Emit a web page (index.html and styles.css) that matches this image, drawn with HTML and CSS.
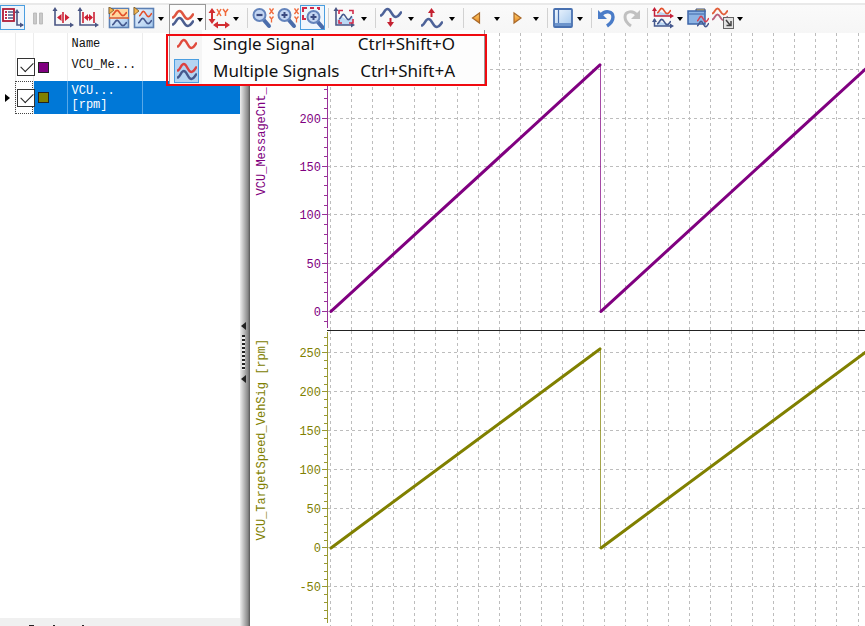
FILE: index.html
```html
<!DOCTYPE html>
<html lang="en">
<head>
    <title>Graphics</title>
    <meta charset="utf-8">
    <link rel="stylesheet" href="styles.css">
</head>
<body>
    <!-- shared shapes and gradients -->
    <svg class="defs" width="0" height="0" aria-hidden="true">
        <defs>
            <linearGradient id="gSky" x2="1" y2="1"><stop offset="0" stop-color="#f2f8ff"/><stop offset="1" stop-color="#a4c8ee"/></linearGradient>
            <linearGradient id="gOrange" x2="0" y2="1"><stop offset="0" stop-color="#ffd070"/><stop offset="1" stop-color="#e8861c"/></linearGradient>
        </defs>
        <symbol id="wave" viewBox="0 0 22 12" preserveAspectRatio="none"><path d="M1 8.500C4 7 4.500 2 7.500 2C11 2 12 10 16 10C18.500 10 19 8 21 5.500" fill="none" stroke-width="2.600" stroke-linecap="round"/></symbol>
        <symbol id="axes" viewBox="0 0 22 22"><path d="M3 3V18H20" fill="none" stroke="#4a5684" stroke-width="1.600"/><path d="M3 0L0.500 4H5.500ZM22 18L18 15.500V20.500Z" fill="#4a5684"/></symbol>
        <symbol id="lens" viewBox="0 0 22 22"><path d="M11 12L17 19" stroke="#4a6cab" stroke-width="4" stroke-linecap="round"/><circle cx="7.500" cy="8" r="6" fill="#c4d6f2" stroke="#6484bc" stroke-width="2"/></symbol>
        <symbol id="xy" viewBox="0 0 5 15"><path d="M0.500 0.500L4.500 6M4.500 0.500L0.500 6M0.500 8.500L2.500 11L4.500 8.500M2.500 11V14.500" fill="none" stroke="#f06a3c" stroke-width="1.300"/></symbol>
    </svg>

    <div class="window">
        <div class="toolbar" role="toolbar">
            <button class="tool active" title="Legend"><svg viewBox="0 0 22 22"><path d="M15 5V18H21" fill="none" stroke="#4a5684" stroke-width="1.600"/><path d="M15 2L12.500 6H17.500ZM22 18L18 15.500V20.500Z" fill="#4a5684"/><rect x="1" y="2" width="11" height="12" fill="#fff" stroke="#b01c38" stroke-width="1.800"/><path d="M3 5H5M3 8H5M3 11H5" stroke="#c03050" stroke-width="1.800"/><path d="M6 5H11M6 8H11M6 11H11" stroke="#4a5684" stroke-width="1.500"/></svg></button>
            <button class="tool" title="Pause"><svg viewBox="0 0 22 22"><path d="M6.500 6H9.500V17H6.500ZM12.500 6H15.500V17H12.500Z" fill="#c9c9c9" stroke="#b4b4b4" stroke-width="0.800"/></svg></button>
            <button class="tool" title="Expand time axis"><svg viewBox="0 0 22 22"><use href="#axes"/><path d="M11 5V16" stroke="#cc2034" stroke-width="1.600"/><path d="M5 10.500L9.500 7V14ZM17.500 10.500L13 7V14Z" fill="#cc2034"/></svg></button>
            <button class="tool" title="Fit time axis"><svg viewBox="0 0 22 22"><use href="#axes"/><path d="M6 5V16M17 5V16M8 10.500H15" stroke="#cc2034" stroke-width="1.600"/><path d="M7 10.500L11 7V14ZM16 10.500L12 7V14Z" fill="#cc2034"/></svg></button>
            <span class="sep"></span>
            <button class="tool" title="Separate views"><svg viewBox="0 0 22 22"><rect x="1.500" y="1.500" width="19" height="19" fill="url(#gSky)" stroke="#5c80b4" stroke-width="1.600"/><rect x="2" y="2" width="18" height="8" fill="#ffd8a0"/><path d="M1 11H21" stroke="#e2602c" stroke-width="1.600"/><use href="#wave" x="4" y="2" width="15" height="8" stroke="#e2502c"/><use href="#wave" x="4" y="12" width="15" height="8" stroke="#46598e"/><path d="M1 0L6 3L1 7Z" fill="#f2b550" stroke="#7a5620" stroke-width="0.800"/></svg></button>
            <button class="tool" title="Common view"><svg viewBox="0 0 22 22"><rect x="1.500" y="1.500" width="19" height="19" fill="url(#gSky)" stroke="#5c80b4" stroke-width="1.600"/><use href="#wave" x="6" y="3" width="13" height="8" stroke="#e2502c"/><use href="#wave" x="5" y="10" width="14" height="8" stroke="#46598e"/><path d="M1 0L6 4L1 8Z" fill="#f2b550" stroke="#7a5620" stroke-width="0.800"/></svg></button>
            <button class="drop" title="View options"></button>
            <div class="split">
                <button class="tool" title="Signal selection"><svg viewBox="0 0 22 22"><use href="#wave" y="2" width="22" height="12" stroke="#df5540"/><use href="#wave" y="9" width="22" height="12" stroke="#4d5f90"/></svg></button>
                <button class="drop" title="Signal selection options"></button>
            </div>
            <button class="tool" title="Axis mode"><svg viewBox="0 0 22 22"><path d="M4 4V14M8 18H19" stroke="#d22c30" stroke-width="2"/><path d="M4 1L0.500 6H7.500ZM4 17L0.500 12H7.500ZM5 18L10 14.500V21.500ZM22 18L17 14.500V21.500Z" fill="#d22c30"/><path d="M9 2L13 9M13 2L9 9M15 2L17.500 5.500L20 2M17.500 5.500V9" fill="none" stroke="#f06a3c" stroke-width="1.500"/></svg></button>
            <button class="drop" title="Axis mode options"></button>
            <span class="sep"></span>
            <button class="tool" title="Zoom out"><svg viewBox="0 0 22 22"><use href="#lens"/><path d="M4.500 8H10.500" stroke="#3a4a80" stroke-width="2.200"/><use href="#xy" x="17" y="1" width="5" height="15"/></svg></button>
            <button class="tool" title="Zoom in"><svg viewBox="0 0 22 22"><use href="#lens"/><path d="M4.500 8H10.500M7.500 5V11" stroke="#3a4a80" stroke-width="2"/><use href="#xy" x="17" y="1" width="5" height="15"/></svg></button>
            <button class="tool active" title="Zoom rectangle"><svg viewBox="0 0 22 22"><path d="M1 5V1H5M8 1H12M1 8V12H4M15 1H17V3" fill="none" stroke="#d22c4a" stroke-width="2"/><use href="#lens" x="4" y="2" width="22" height="22"/><path d="M8.500 10H14.500M11.500 7V13" stroke="#3a4a80" stroke-width="2"/></svg></button>
            <span class="sep"></span>
            <button class="tool" title="Fit"><svg viewBox="0 0 22 22"><path d="M4 13L8 9L14 13L20 9V18H4Z" fill="#bcd8f4"/><use href="#axes"/><use href="#wave" x="6" y="6" width="13" height="8" stroke="#46598e"/><path d="M6 7V3.500H10M16 3.500H20V7M20 12V16H16M6 13V16H9" fill="none" stroke="#d22c4a" stroke-width="1.600"/></svg></button>
            <button class="drop wide" title="Fit options"></button>
            <span class="sep"></span>
            <button class="tool" title="Move down"><svg viewBox="0 0 22 22"><use href="#wave" width="22" height="12" stroke="#4d6298"/><path d="M10.500 11V16" stroke="#c42030" stroke-width="2"/><path d="M7 15H14L10.500 20Z" fill="#c42030"/></svg></button>
            <button class="drop wide" title="Move down options"></button>
            <button class="tool" title="Move up"><svg viewBox="0 0 22 22"><use href="#wave" y="10" width="22" height="12" stroke="#4d6298"/><path d="M10.500 5V10" stroke="#c42030" stroke-width="2"/><path d="M7 6H14L10.500 1Z" fill="#c42030"/></svg></button>
            <button class="drop wide" title="Move up options"></button>
            <span class="sep"></span>
            <button class="tool step" title="Previous"><svg viewBox="0 0 22 22"><path d="M5.500 11L12.500 6V16Z" fill="url(#gOrange)" stroke="#a8692a" stroke-width="1.200"/></svg></button>
            <button class="drop wide" title="Previous options"></button>
            <button class="tool step" title="Next"><svg viewBox="0 0 22 22"><path d="M15 11L8 6V16Z" fill="url(#gOrange)" stroke="#a8692a" stroke-width="1.200"/></svg></button>
            <button class="drop wide" title="Next options"></button>
            <span class="sep"></span>
            <button class="tool" title="Layout"><svg viewBox="0 0 22 22"><rect x="2" y="2" width="18" height="18" rx="1" fill="url(#gSky)" stroke="#4870b0" stroke-width="1.800"/><path d="M3 16H19V19H3Z" fill="#6c94cc"/><path d="M6.500 3V16" stroke="#4870b0" stroke-width="1.200"/></svg></button>
            <button class="drop" title="Layout options"></button>
            <span class="sep"></span>
            <button class="tool" title="Undo"><svg viewBox="0 0 22 22"><path d="M5 8C9 3 17 4 17 10C17 14 14 17 11 19" fill="none" stroke="#4a7cc8" stroke-width="3.400"/><path d="M2 3V12H11Z" fill="#4a7cc8"/></svg></button>
            <button class="tool" title="Redo"><svg viewBox="0 0 22 22"><path d="M16 8C12 3 4 4 4 10C4 14 7 17 10 19" fill="none" stroke="#c0c0c0" stroke-width="3"/><path d="M19 3V12H10Z" fill="#c0c0c0"/></svg></button>
            <span class="sep"></span>
            <button class="tool" title="Axis arrangement"><svg viewBox="0 0 22 22"><path d="M3 9L8 5L20 8V9ZM3 19L8 15L20 18V19Z" fill="#bcd8f4"/><path d="M2.500 2V9H20" fill="none" stroke="#c42038" stroke-width="1.500"/><path d="M2.500 0L0 4H5ZM22 9L18 6.500V11.500Z" fill="#c42038"/><path d="M2.500 12V19H20" fill="none" stroke="#46598e" stroke-width="1.500"/><path d="M2.500 11L0 15H5ZM22 19L18 16.500V21.500Z" fill="#46598e"/><use href="#wave" x="5" y="0" width="14" height="8" stroke="#e2502c"/><use href="#wave" x="5" y="11" width="14" height="8" stroke="#46598e"/></svg></button>
            <button class="drop" title="Axis arrangement options"></button>
            <button class="tool" title="Signal file"><svg viewBox="0 0 22 22"><path d="M9 2H18V5H9Z" fill="#f4cf60" stroke="#3c4f80"/><rect x="1" y="4" width="17" height="13" fill="#8db4e4" stroke="#3e66a8" stroke-width="1.500"/><path d="M2 7H17" stroke="#3e66a8"/><use href="#wave" x="10" y="8" width="12" height="8" stroke="#d84050"/><use href="#wave" x="10" y="13" width="12" height="8" stroke="#46598e"/></svg></button>
            <button class="tool" title="Export signals"><svg viewBox="0 0 22 22"><use href="#wave" width="16" height="9" stroke="#e2603c"/><use href="#wave" y="6" width="16" height="9" stroke="#b8607c"/><rect x="11.500" y="10.500" width="10" height="11" fill="#e4e4e4" stroke="#666"/><path d="M14 13L18 18M19 14V18.500H14.500" fill="none" stroke="#444" stroke-width="1.500"/></svg></button>
            <button class="drop" title="Export options"></button>
        </div>

        <div class="main">
            <div class="legend">
                <table class="signals">
                    <colgroup><col class="c-mark"><col class="c-check"><col class="c-color"><col class="c-name"><col></colgroup>
                    <thead>
                        <tr><th></th><th></th><th></th><th>Name</th><th></th></tr>
                    </thead>
                    <tbody>
                        <tr class="row1">
                            <td></td>
                            <td><input type="checkbox" checked aria-label="VCU_MessageCnt"></td>
                            <td><span class="swatch purple"></span></td>
                            <td>VCU_Me...</td>
                            <td></td>
                        </tr>
                        <tr class="row2 selected">
                            <td><span class="marker"></span></td>
                            <td><input type="checkbox" checked aria-label="VCU_TargetSpeed"></td>
                            <td><span class="swatch olive"></span></td>
                            <td>VCU...<br>[rpm]</td>
                            <td></td>
                        </tr>
                    </tbody>
                </table>
                <div class="footer"><svg width="90" height="8"><path d="M29 7.500H34M53 7.500H55M82 7.500H84" stroke="#222"/></svg></div>
            </div>
            <div class="splitter">
                <span class="grip-arrow"></span>
                <span class="grip-dots"></span>
                <span class="grip-arrow"></span>
            </div>
            <div class="charts">
                <svg class="chart purple-chart" id="chart1"></svg>
                <svg class="chart olive-chart" id="chart2"></svg>
            </div>
        </div>

        <div class="menu" role="menu">
            <button class="item" role="menuitem">
                <span class="item-icon"><svg viewBox="0 0 22 22"><use href="#wave" x="1" y="5" width="20" height="12" stroke="#e04a3c"/></svg></span>
                <span>Single Signal</span><span class="key">Ctrl+Shift+O</span>
            </button>
            <button class="item" role="menuitem">
                <span class="item-icon checked"><svg viewBox="0 0 22 22"><use href="#wave" x="1" y="2" width="20" height="12" stroke="#dc4040"/><use href="#wave" x="1" y="9" width="20" height="12" stroke="#46598e"/></svg></span>
                <span>Multiple Signals</span><span class="key">Ctrl+Shift+A</span>
            </button>
        </div>
        <div class="callout"></div>
    </div>

    <script src="chart.js"></script>
</body>
</html>
```
FILE: styles.css
```css
* {
    box-sizing: border-box;
}
body {
    margin: 0;
    background: #fff;
    font-family: "Liberation Mono", "Noto Sans CJK SC", monospace;
    font-size: 12px;
    color: #111;
}
button {
    margin: 0;
    padding: 0;
    border: none;
    background: none;
    font: inherit;
    color: inherit;
}
.defs {
    position: absolute;
}
.window {
    position: relative;
    display: flex;
    flex-direction: column;
    height: 100vh;
    overflow: hidden;
}

/* toolbar */
.toolbar {
    display: flex;
    flex: none;
    align-items: center;
    height: 33px;
    padding-bottom: 1px;
    border-top: 3px solid #fff;
    background: linear-gradient(#e9e9e9 0, #e9e9e9 2px, #fafafa 2px, #f6f6f6);
}
.tool {
    display: flex;
    flex: none;
    align-items: center;
    justify-content: center;
    width: 25px;
    height: 25px;
}
.tool.step {
    width: 23px;
}
.tool.active {
    border: 1px solid #4a9ee0;
    background: #eef5fc;
}
.tool svg {
    flex: none;
    width: 22px;
    height: 22px;
}
.drop {
    display: flex;
    flex: none;
    justify-content: center;
    width: 10px;
    padding-top: 3px;
}
.drop.wide {
    width: 16px;
}
.drop::after {
    content: "";
    border: 3px solid transparent;
    border-top: 4px solid #000;
    border-bottom: none;
}
.sep {
    flex: none;
    width: 1px;
    height: 20px;
    margin: 0 2px 0 3px;
    background: #d2d2d2;
}
.drop:not(.wide) + .sep {
    margin-left: 6px;
}
.split {
    display: flex;
    flex: none;
    align-items: center;
    height: 28px;
    margin-left: 3px;
    border: 1px solid #999;
    border-bottom: none;
    background: #fcfcfc;
}

/* legend */
.main {
    display: flex;
    flex: 1;
    min-height: 0;
}
.legend {
    display: flex;
    flex: none;
    flex-direction: column;
    justify-content: space-between;
    width: 240px;
}
.signals {
    width: 100%;
    table-layout: fixed;
    border-collapse: collapse;
    line-height: 14px;
}
.c-mark {
    width: 15px;
}
.c-check {
    width: 18px;
}
.c-color {
    width: 34px;
}
.c-name {
    width: 75px;
}
.signals th, .signals td {
    padding: 0;
    border-right: 1px solid #ececec;
    text-align: left;
    font-weight: normal;
    vertical-align: middle;
}
.signals th:last-child, .signals td:last-child {
    border-right: none;
}
.signals th:nth-child(4), .signals td:nth-child(4) {
    padding-left: 4px;
}
.signals th {
    height: 22px;
}
.row1 td {
    height: 26px;
    vertical-align: top;
    padding-top: 3px;
}
.row2 td {
    height: 33px;
}
.selected td:nth-child(n+3) {
    background: #0078d7;
    color: #fff;
    border-color: #58a8e8;
}
.selected td:nth-child(2) {
    outline: 1px dotted #444;
    outline-offset: -1px;
}
.signals input {
    display: block;
    appearance: none;
    position: relative;
    width: 18px;
    height: 18px;
    margin: 0 0 0 1px;
    border: 1px solid #333;
    background: #fff;
}
.signals input:checked::after {
    content: "";
    position: absolute;
    left: 3px;
    top: 3px;
    width: 11px;
    height: 6px;
    border: solid #222;
    border-width: 0 0 1px 1px;
    transform: rotate(-45deg);
}
.swatch {
    display: block;
    width: 11px;
    height: 11px;
    margin-left: 4px;
    border: 1px solid #222;
}
.row1 .swatch {
    margin-top: 4px;
}
.purple {
    background: #800080;
}
.olive {
    background: #808000;
}
.marker {
    display: block;
    width: 0;
    margin-left: 5px;
    border: 4px solid transparent;
    border-left: 5px solid #000;
    border-right: none;
}
.footer {
    height: 8px;
    background: #f0f0f0;
}
.footer svg {
    display: block;
}

/* splitter */
.splitter {
    display: flex;
    flex: none;
    flex-direction: column;
    align-items: flex-start;
    justify-content: center;
    gap: 5px;
    width: 10px;
    padding: 46px 0 0 1px;
    background: linear-gradient(90deg, #eee, #bbb 40%, #888 80%, #555);
}
.grip-arrow {
    border: 4px solid transparent;
    border-right: 5px solid #222;
    border-left: none;
}
.grip-dots {
    width: 3px;
    height: 35px;
    margin-left: 1px;
    background: repeating-linear-gradient(#222 0, #222 2px, #eee 2px, #eee 4px);
}

/* charts */
.charts {
    display: flex;
    flex: 1;
    flex-direction: column;
    min-width: 0;
}
.chart {
    display: block;
    flex: 1;
    width: 100%;
    min-height: 0;
    overflow: hidden;
}
.purple-chart {
    flex-basis: 3px; /* room for the divider */
    color: #800080;
}
.olive-chart {
    color: #808000;
}
.chart text {
    fill: currentColor;
}
.grid {
    stroke: #bdbdbd;
    stroke-dasharray: 3 3;
}
.axis {
    stroke: currentColor;
    opacity: 0.8;
}
.line {
    fill: none;
    stroke: currentColor;
    stroke-width: 3;
    stroke-linecap: round;
}
.fall {
    stroke: currentColor;
    opacity: 0.7;
}
.divider {
    stroke: #222;
}

/* popup menu */
.menu {
    position: absolute;
    left: 169px;
    top: 30px;
    width: 316px;
    padding-bottom: 1px;
    border: 1px solid #999;
    border-top: none;
    background: linear-gradient(90deg, #f5f5f5 32px, #fdfdfd 32px);
    font-family: "Noto Sans", "Open Sans", sans-serif;
    font-size: 17px;
}
.item {
    display: grid;
    grid-template-columns: 43px 1fr auto;
    align-items: center;
    width: 100%;
    height: 27px;
    padding-right: 29px;
    text-align: left;
}
.item-icon {
    display: flex;
    align-items: center;
    justify-content: center;
    width: 25px;
    height: 24px;
    margin-left: 4px;
}
.item-icon svg {
    flex: none;
    width: 22px;
    height: 22px;
}
.item-icon.checked {
    border: 1px solid #4a9ee0;
    background: #b4d4f2;
}
.callout {
    position: absolute;
    left: 166px;
    top: 34px;
    width: 321px;
    height: 52px;
    border: 2px solid #f00a10;
    pointer-events: none;
}
```
FILE: chart.js
```js
const NS = 'http://www.w3.org/2000/svg';
const AXIS_X = 77;
const START_X = 81;
const PERIOD = 270;
const GRID_STEP = 21.1;

function add(svg, tag, attrs, text) {
    const el = document.createElementNS(NS, tag);
    for (const key in attrs) {
        el.setAttribute(key, attrs[key]);
    }
    if (text !== undefined) {
        el.textContent = text;
    }
    svg.appendChild(el);
}

function drawChart(id, opts) {
    const svg = document.getElementById(id);
    const w = svg.clientWidth;
    const h = svg.clientHeight;
    const y = v => (opts.max - v) / (opts.max - opts.min) * h;
    svg.textContent = '';

    // grid
    for (let x = START_X - 1; x < w; x += GRID_STEP) {
        const px = Math.round(x) + 0.5;
        add(svg, 'line', { class: 'grid', x1: px, x2: px, y1: 0, y2: h });
    }
    // ticks and labels
    for (let v = Math.ceil(opts.min / 10) * 10 + 10; v < opts.max; v += 10) {
        const py = Math.floor(y(v)) + 0.5;
        const major = v % 50 === 0;
        add(svg, 'line', { class: 'axis', x1: major ? AXIS_X - 5 : AXIS_X - 3, x2: AXIS_X, y1: py, y2: py });
        if (major) {
            add(svg, 'line', { class: 'grid', x1: AXIS_X + 1, x2: w, y1: py, y2: py });
            if (v <= opts.maxLabel) {
                add(svg, 'text', { x: AXIS_X - 6, y: py + 4, 'text-anchor': 'end' }, v);
            }
        }
    }
    add(svg, 'line', { class: 'axis', x1: AXIS_X + 0.5, x2: AXIS_X + 0.5, y1: 1, y2: h - 3 });

    // sawtooth 0..255
    for (let x = START_X; x < w; x += PERIOD) {
        add(svg, 'path', { class: 'line', d: `M${x} ${y(0)}L${x + PERIOD - 1} ${y(255)}` });
        add(svg, 'line', { class: 'fall', x1: x + PERIOD - 0.5, x2: x + PERIOD - 0.5, y1: y(255), y2: y(0) });
    }

    add(svg, 'text', {
        transform: `translate(15 ${opts.titleY * h}) rotate(-90)`
    }, opts.title);
    if (opts.divider) {
        add(svg, 'line', { class: 'divider', x1: AXIS_X, x2: w, y1: h - 0.5, y2: h - 0.5 });
    }
}

function draw() {
    drawChart('chart1', { min: -20.3, max: 288, maxLabel: 200, title: 'VCU_MessageCnt_', titleY: 0.545, divider: true });
    drawChart('chart2', { min: -100, max: 278, maxLabel: 250, title: 'VCU_TargetSpeed_VehSig [rpm]', titleY: 0.71 });
}

window.addEventListener('resize', draw);
draw();
```
